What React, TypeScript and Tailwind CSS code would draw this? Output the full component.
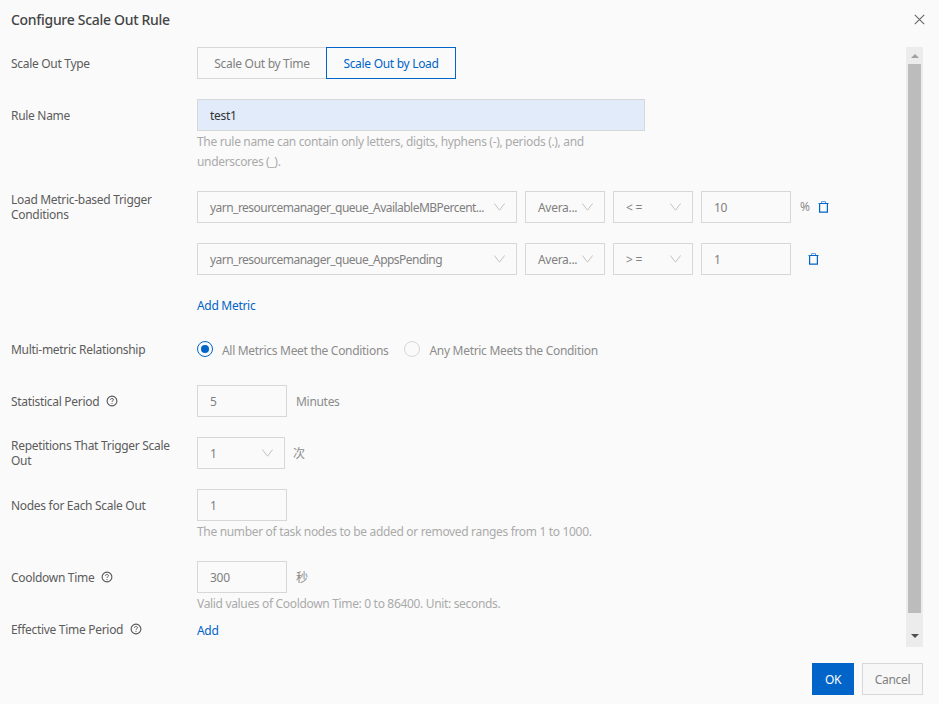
import { ReactNode } from "react";

const FONT = "font-['Noto_Sans','Noto_Sans_CJK_SC',sans-serif]";

function Chevron() {
  return (
    <svg width="11" height="8" viewBox="0 0 11 8" fill="none" className="shrink-0">
      <path d="M0.4 0.5L5.5 7.2L10.6 0.5" stroke="#c2c2c2" strokeWidth="1" />
    </svg>
  );
}

function HelpIcon() {
  return (
    <svg width="12" height="12" viewBox="0 0 12 12" fill="none" className="ml-[7px] shrink-0">
      <circle cx="6" cy="6" r="4.9" stroke="#555" strokeWidth="1.1" />
      <path d="M4.5 4.9C4.5 4 5.1 3.5 6 3.5C6.9 3.5 7.5 4 7.5 4.8C7.5 5.7 6 5.8 6 6.9" stroke="#555" strokeWidth="1" />
      <circle cx="6" cy="8.5" r="0.6" fill="#555" />
    </svg>
  );
}

function TrashIcon() {
  return (
    <svg width="11" height="12" viewBox="0 0 11 12" fill="none" className="shrink-0">
      <path d="M0 2.5H11" stroke="#7fb0e6" strokeWidth="1" />
      <path d="M3.5 2V0.6H7.5V2" stroke="#5c9ae0" strokeWidth="1" />
      <path d="M1.6 2.5V11.2H9.4V2.5H1.6" stroke="#0064c8" strokeWidth="1.2" />
    </svg>
  );
}

function Row({ label, help, children, className }: { label: string; help?: boolean; children: ReactNode; className?: string }) {
  return (
    <div className={`flex ${className ?? "mb-5"}`}>
      <div className="w-[197px] shrink-0 pl-[11px] pr-[22px]">
        <div className="flex h-8 items-center leading-[15px] text-[#5c5c5c]">
          <span>{label}</span>
          {help && <HelpIcon />}
        </div>
      </div>
      <div className="min-w-0 flex-1">{children}</div>
    </div>
  );
}

function Select({ value, width, textClass }: { value: string; width: string; textClass?: string }) {
  return (
    <div className={`flex h-8 items-center gap-[2px] border border-[#d7d7d7] pl-3 pr-[11px] text-[#808080] ${width}`}>
      <span className={`min-w-0 flex-1 whitespace-nowrap pt-[2px] ${textClass ?? ""}`}>{value}</span>
      <Chevron />
    </div>
  );
}

function TextInput({ value, width }: { value: string; width: string }) {
  return (
    <input
      readOnly
      value={value}
      className={`h-8 border border-[#d7d7d7] bg-transparent px-3 text-[#808080] outline-none ${width}`}
    />
  );
}

function Radio({ checked, label }: { checked?: boolean; label: string }) {
  return (
    <div className="flex items-center">
      <span
        className={`flex h-4 w-4 items-center justify-center rounded-full border ${
          checked ? "border-[#0064c8]" : "border-[#d7d7d7]"
        }`}
      >
        {checked && <span className="h-2 w-2 rounded-full bg-[#0064c8]" />}
      </span>
      <span className="ml-[9px] pt-[3px] text-[#8c8c8c]">{label}</span>
    </div>
  );
}

function MetricRow({ metric, op, value, unit }: { metric: string; op: string; value: string; unit?: string }) {
  return (
    <div className="flex items-center gap-2">
      <Select value={metric} width="w-[320px]" textClass="tracking-[-0.53px]" />
      <Select value="Avera..." width="w-20" />
      <Select value={op} width="w-20" />
      <TextInput value={value} width="w-[90px]" />
      <span className={`ml-px text-[#8c8c8c] ${unit ? "w-[10px]" : "w-0"}`}>{unit}</span>
      <TrashIcon />
    </div>
  );
}

export default function App() {
  return (
    <div className={`flex h-[704px] w-[939px] flex-col overflow-hidden bg-[#fafafa] text-xs tracking-[-0.3px] ${FONT}`}>
      {/* Header */}
      <div className="flex h-[47px] items-start justify-between pl-[11px] pr-[14px] pt-[10px]">
        <h1 className="text-sm font-medium leading-5 text-[#444]">Configure Scale Out Rule</h1>
        <svg width="11" height="11" viewBox="0 0 11 11" fill="none" className="mt-[4px]">
          <path d="M0.8 0.8L10.2 10.2M10.2 0.8L0.8 10.2" stroke="#666" strokeWidth="1.1" />
        </svg>
      </div>

      {/* Scrolling form */}
      <div className="flex h-[600px] pr-4">
        <div className="min-w-0 flex-1 overflow-hidden">
          <Row label="Scale Out Type">
            <div className="flex h-8">
              <button className="w-[129px] border border-r-0 border-[#d7d7d7] pt-px text-[#808080]">Scale Out by Time</button>
              <button className="w-[130px] border border-[#0064c8] pt-px text-[#0064c8]">Scale Out by Load</button>
            </div>
          </Row>

          <Row label="Rule Name" className="mb-[19px]">
            <input
              readOnly
              value="test1"
              className="h-8 w-[448px] border border-[#d7d7d7] bg-[#e1ebfa] px-3 pt-px text-[#333] outline-none"
            />
            <p className="w-[448px] pt-px leading-5 tracking-[-0.33px] text-[#aaa]">
              The rule name can contain only letters, digits, hyphens (-), periods (.), and underscores (_).
            </p>
          </Row>

          <Row label="Load Metric-based Trigger Conditions" className="mb-[17px]">
            <div className="flex flex-col gap-5">
              <MetricRow metric="yarn_resourcemanager_queue_AvailableMBPercent..." op="< =" value="10" unit="%" />
              <MetricRow metric="yarn_resourcemanager_queue_AppsPending" op="> =" value="1" />
              <a className="pt-px leading-5 text-[#0064c8]">Add Metric</a>
            </div>
          </Row>

          <Row label="Multi-metric Relationship">
            <div className="flex h-8 items-center gap-[16px]">
              <Radio checked label="All Metrics Meet the Conditions" />
              <Radio label="Any Metric Meets the Condition" />
            </div>
          </Row>

          <Row label="Statistical Period" help>
            <div className="flex items-center">
              <TextInput value="5" width="w-[90px]" />
              <span className="ml-[9px] pt-[2px] text-[#8c8c8c]">Minutes</span>
            </div>
          </Row>

          <Row label="Repetitions That Trigger Scale Out">
            <div className="flex items-center">
              <Select value="1" width="w-[88px]" />
              <span className="ml-[8px] pt-[2px] text-[#8c8c8c]">次</span>
            </div>
          </Row>

          <Row label="Nodes for Each Scale Out" className="mb-[19px]">
            <TextInput value="1" width="w-[90px] block" />
            <p className="pt-px leading-5 tracking-[-0.33px] text-[#aaa]">The number of task nodes to be added or removed ranges from 1 to 1000.</p>
          </Row>

          <Row label="Cooldown Time" help className="mb-[5px]">
            <div className="flex items-center">
              <TextInput value="300" width="w-[90px]" />
              <span className="ml-[9px] pt-[2px] text-[#8c8c8c]">秒</span>
            </div>
            <p className="pt-px leading-5 tracking-[-0.33px] text-[#aaa]">Valid values of Cooldown Time: 0 to 86400. Unit: seconds.</p>
          </Row>

          <div className="-mt-[6px]">
            <Row label="Effective Time Period" help>
              <a className="flex h-8 items-center pt-[4px] text-[#0064c8]">Add</a>
            </Row>
          </div>
        </div>

        {/* Scrollbar */}
        <div className="flex w-[17px] shrink-0 flex-col items-center bg-[#ececec]">
          <div className="flex h-[17px] items-center justify-center">
            <span className="h-0 w-0 border-x-[4px] border-b-[4px] border-x-transparent border-b-[#a0a0a0]" />
          </div>
          <div className="h-[549px] w-[13px] bg-[#bcbcbc]" />
          <div className="flex flex-1 items-center justify-center pt-[12px]">
            <span className="h-0 w-0 border-x-[4px] border-t-[4px] border-x-transparent border-t-[#505050]" />
          </div>
        </div>
      </div>

      {/* Footer */}
      <div className="flex justify-end gap-2 pr-4 pt-4">
        <button className="h-8 w-[42px] bg-[#0064c8] pt-[2px] text-white">OK</button>
        <button className="h-8 w-[61px] border border-[#d7d7d7] bg-[#f7f7f7] pt-[2px] text-[#808080]">Cancel</button>
      </div>
    </div>
  );
}
